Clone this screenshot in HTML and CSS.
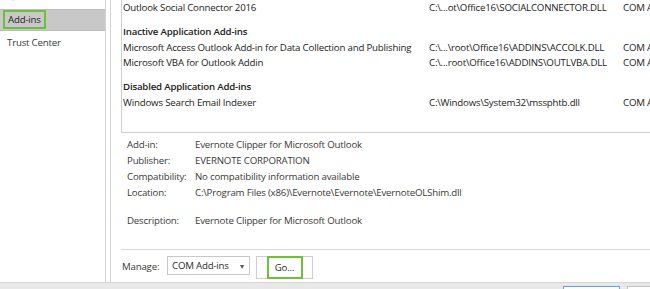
FILE: index.html
```html
<!DOCTYPE html>
<html lang="en">
<head>
    <meta charset="UTF-8">
    <title>Outlook Options - Add-ins</title>
    <link rel="stylesheet" href="styles.css">
</head>
<body>
    <div class="window">
        <div class="main">
            <!-- Menu lateral -->
            <div class="sidebar">
                <div class="nav-item cut"><span>Quick Access Toolbar</span></div>
                <div class="nav-item active"><span class="mark">Add-ins</span></div>
                <div class="nav-item">Trust Center</div>
            </div>

            <div class="panel">
                <div class="list-box">
                    <div class="row">
                        <span>Outlook Social Connector 2016</span>
                        <span>C:\...ot\Office16\SOCIALCONNECTOR.DLL</span>
                        <span>COM Add-in</span>
                    </div>

                    <div class="group-title">Inactive Application Add-ins</div>
                    <div class="row">
                        <span>Microsoft Access Outlook Add-in for Data Collection and Publishing</span>
                        <span>C:\...\root\Office16\ADDINS\ACCOLK.DLL</span>
                        <span>COM Add-in</span>
                    </div>
                    <div class="row">
                        <span>Microsoft VBA for Outlook Addin</span>
                        <span>C:\...root\Office16\ADDINS\OUTLVBA.DLL</span>
                        <span>COM Add-in</span>
                    </div>

                    <div class="group-title">Disabled Application Add-ins</div>
                    <div class="row">
                        <span>Windows Search Email Indexer</span>
                        <span>C:\Windows\System32\mssphtb.dll</span>
                        <span>COM Add-in</span>
                    </div>
                </div>

                <div class="details">
                    <div class="detail"><span class="label">Add-in:</span><span>Evernote Clipper for Microsoft Outlook</span></div>
                    <div class="detail"><span class="label">Publisher:</span><span>EVERNOTE CORPORATION</span></div>
                    <div class="detail"><span class="label">Compatibility:</span><span>No compatibility information available</span></div>
                    <div class="detail"><span class="label">Location:</span><span>C:\Program Files (x86)\Evernote\Evernote\EvernoteOLShim.dll</span></div>
                    <div class="detail spaced"><span class="label">Description:</span><span>Evernote Clipper for Microsoft Outlook</span></div>
                </div>

                <div class="manage">
                    <span class="manage-label">Manage:</span>
                    <div class="select">COM Add-ins <span class="arrow">&#9662;</span></div>
                    <button class="go"><span class="mark">Go...</span></button>
                </div>
            </div>
        </div>

        <div class="footer">
            <button class="btn ok">OK</button>
            <button class="btn">Cancel</button>
        </div>
    </div>
</body>
</html>
```

FILE: styles.css
```css
body {
    margin: 0;
    font-family: 'Open Sans', 'Noto Sans', sans-serif;
    font-size: 9.7px;
    letter-spacing: -0.2px;
    color: #2b2b2b;
    background: #fff;
    overflow: hidden;
}

.window {
    width: 650px;
    height: 289px;
    display: flex;
    flex-direction: column;
    overflow: hidden;
}

.main {
    height: 283px;
    flex-shrink: 0;
    display: flex;
    border-bottom: 1px solid #d6d6d6;
    box-sizing: border-box;
}

/* Menu lateral */
.sidebar {
    width: 105px;
    border-right: 1px solid #d4d4d4;
    margin-right: 4px;
    flex-shrink: 0;
}

.nav-item {
    height: 22px;
    line-height: 22px;
    padding-left: 7px;
    color: #3a3a3a;
}

/* item cortado no topo */
.nav-item.cut {
    height: 9px;
    overflow: hidden;
    color: #999;
}

.nav-item.cut span {
    display: block;
    margin-top: -12px;
    line-height: 16px;
}

.nav-item.active {
    background: #c8c8c8;
    border-top: 1px solid #bdbdbd;
    border-bottom: 1px solid #bdbdbd;
    height: 20px;
    line-height: 20px;
    padding-left: 3px;
    color: #1e1e1e;
}

.mark {
    display: inline-block;
    border: 2px solid #6dbf3e;
    padding: 0 3px;
    line-height: 15px;
}

.nav-item.active + .nav-item {
    margin-top: 1px;
}

/* Painel principal */
.panel {
    flex: 1;
    border-left: 1px solid #d4d4d4;
    padding-left: 10px;
    display: flex;
    flex-direction: column;
    overflow: hidden;
}

.list-box {
    border: 1px solid #cfcfcf;
    border-top: 0;
    border-right: 0;
    height: 133px;
    box-sizing: border-box;
    padding-left: 1px;
    width: 560px;
    flex-shrink: 0;
}

.row {
    display: grid;
    grid-template-columns: 306px 194px 80px;
    line-height: 15px;
    white-space: nowrap;
    color: #222;
}

.row span {
    overflow: hidden;
}

.group-title {
    font-weight: 600;
    color: #222;
    line-height: 16px;
    margin-top: 8px;
    padding-top: 1px;
}

.details {
    padding: 4px 0 0 6px;
}

.detail {
    display: flex;
    line-height: 16px;
    color: #3a3a3a;
    white-space: nowrap;
}

.detail .label {
    width: 68px;
    flex-shrink: 0;
}

.detail.spaced {
    margin-top: 12px;
}

.manage {
    margin-top: 20px;
    border-top: 1px solid #d8d8d8;
    padding-top: 6px;
    display: flex;
    align-items: flex-start;
    color: #3a3a3a;
}

.manage-label {
    padding-left: 1px;
    line-height: 22px;
    width: 45px;
}

.select {
    width: 83px;
    height: 19px;
    line-height: 18px;
    border: 1px solid #c9c9c9;
    padding-left: 4px;
    box-sizing: border-box;
    position: relative;
    color: #2b2b2b;
}

.arrow {
    position: absolute;
    right: 5px;
    top: 0;
    font-size: 8px;
    color: #555;
}

.go {
    margin-left: 6px;
    width: 57px;
    height: 23px;
    border: 1px solid #cfcfcf;
    background: #fdfdfd;
    padding: 0;
    font-family: inherit;
    font-size: 9.7px;
    letter-spacing: -0.2px;
    color: #2b2b2b;
    display: flex;
    justify-content: center;
    align-items: stretch;
}

.go .mark {
    margin-top: -1px;
    margin-bottom: -1px;
    width: 36px;
    padding: 0;
    line-height: 19px;
    box-sizing: border-box;
}

/* Barra inferior */
.footer {
    flex: 1;
    background: #e8e8e8;
    display: flex;
    padding-left: 563px;
    padding-top: 3px;
    gap: 7px;
    overflow: hidden;
}

.btn {
    width: 57px;
    height: 22px;
    border: 1px solid #c4c4c4;
    background: #fff;
    padding: 0;
    font-size: 10px;
    flex-shrink: 0;
}

.btn.ok {
    border-color: #5ca6e0;
}
```
